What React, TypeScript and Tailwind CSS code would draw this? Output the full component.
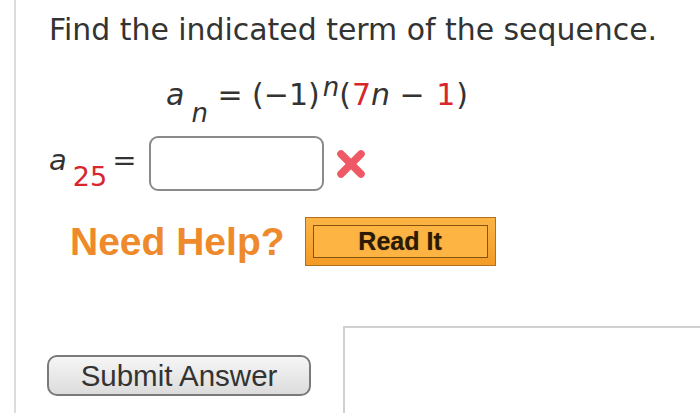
import React from "react";

const serif = { fontFamily: '"DejaVu Sans", Verdana, sans-serif' };
const arial = { fontFamily: '"Liberation Sans", Arial, Helvetica, sans-serif' };

function WrongMark() {
  return (
    <svg width="30" height="30" viewBox="0 0 30 30" aria-hidden>
      <g stroke="#ef5865" strokeWidth="7.5" strokeLinecap="round">
        <line x1="5" y1="5" x2="25" y2="25" />
        <line x1="25" y1="5" x2="5" y2="25" />
      </g>
    </svg>
  );
}

function Formula() {
  return (
    <div className="flex h-[36px] items-baseline pl-[150px] text-[30px] leading-[36px] text-[#333]" style={serif}>
      <span className="italic">a</span>
      <span className="relative top-[17px] ml-[7px] text-[26px] italic leading-none">n</span>
      <span className="whitespace-pre"> = (−1)</span>
      <span className="relative -top-[9px] ml-[3px] text-[26px] italic leading-none">n</span>
      <span>(</span>
      <span className="ml-[1px] text-[#d8262c]">7</span>
      <span className="italic">n</span>
      <span className="whitespace-pre"> − </span>
      <span className="ml-[2px] text-[#d8262c]">1</span>
      <span className="ml-[1px]">)</span>
    </div>
  );
}

export default function App() {
  return (
    <div className="h-[413px] w-[700px] overflow-hidden bg-white">
      <div className="ml-[14px] flex h-full flex-col border-l-2 border-[#dcdcdc]">
        <h1
          className="pl-[33px] pt-[12px] text-[29.9px] font-normal leading-[36px] text-[#333]"
          style={serif}
        >
          Find the indicated term of the sequence.
        </h1>

        <div className="mt-[29px]">
          <Formula />
        </div>

        <div className="mt-[23px] flex h-[55px] items-center pl-[33px] text-[#333]" style={serif}>
          <span className="relative -top-[3px] text-[29px] italic leading-none">a</span>
          <span className="relative top-[13px] ml-[6px] text-[27px] leading-none text-[#d8262c]">25</span>
          <span className="relative -top-[3px] ml-[5px] text-[29px] leading-none">=</span>
          <div className="ml-[13px] h-[55px] w-[175px] rounded-[9px] border-2 border-[#8a8a8a] bg-white" />
          <div className="ml-[12px]">
            <WrongMark />
          </div>
        </div>

        <div className="mt-[26px] flex h-[49px] items-center pl-[54px]">
          <span className="text-[39px] font-bold leading-none text-[#ee8a2b]" style={arial}>
            Need Help?
          </span>
          <button
            type="button"
            className="ml-[20px] flex h-[49px] w-[191px] items-center justify-center border border-[#b2701f] bg-gradient-to-b from-[#fbb545] to-[#f39b25] p-[7px]"
          >
            <span
              className="flex h-full w-full items-center justify-center border border-[#86530f] bg-[#fdb443] text-[25px] font-bold leading-none text-[#2a1a06]"
              style={{ ...arial, textShadow: "0 0 1px rgba(60,30,0,0.5)" }}
            >
              Read It
            </span>
          </button>
        </div>

        <div className="mt-[60px] flex flex-1">
          <div className="w-[327px] pl-[31px] pt-[29px]">
            <button
              type="button"
              className="flex h-[41px] w-[264px] items-center justify-center rounded-[10px] border-2 border-[#7a7a7a] bg-gradient-to-b from-[#f6f6f6] to-[#dcdcdc] text-[29.5px] leading-none text-[#333]"
              style={arial}
            >
              Submit Answer
            </button>
          </div>
          <div className="flex-1 border-l-2 border-t-2 border-[#d0d0d0]" />
        </div>
      </div>
    </div>
  );
}
